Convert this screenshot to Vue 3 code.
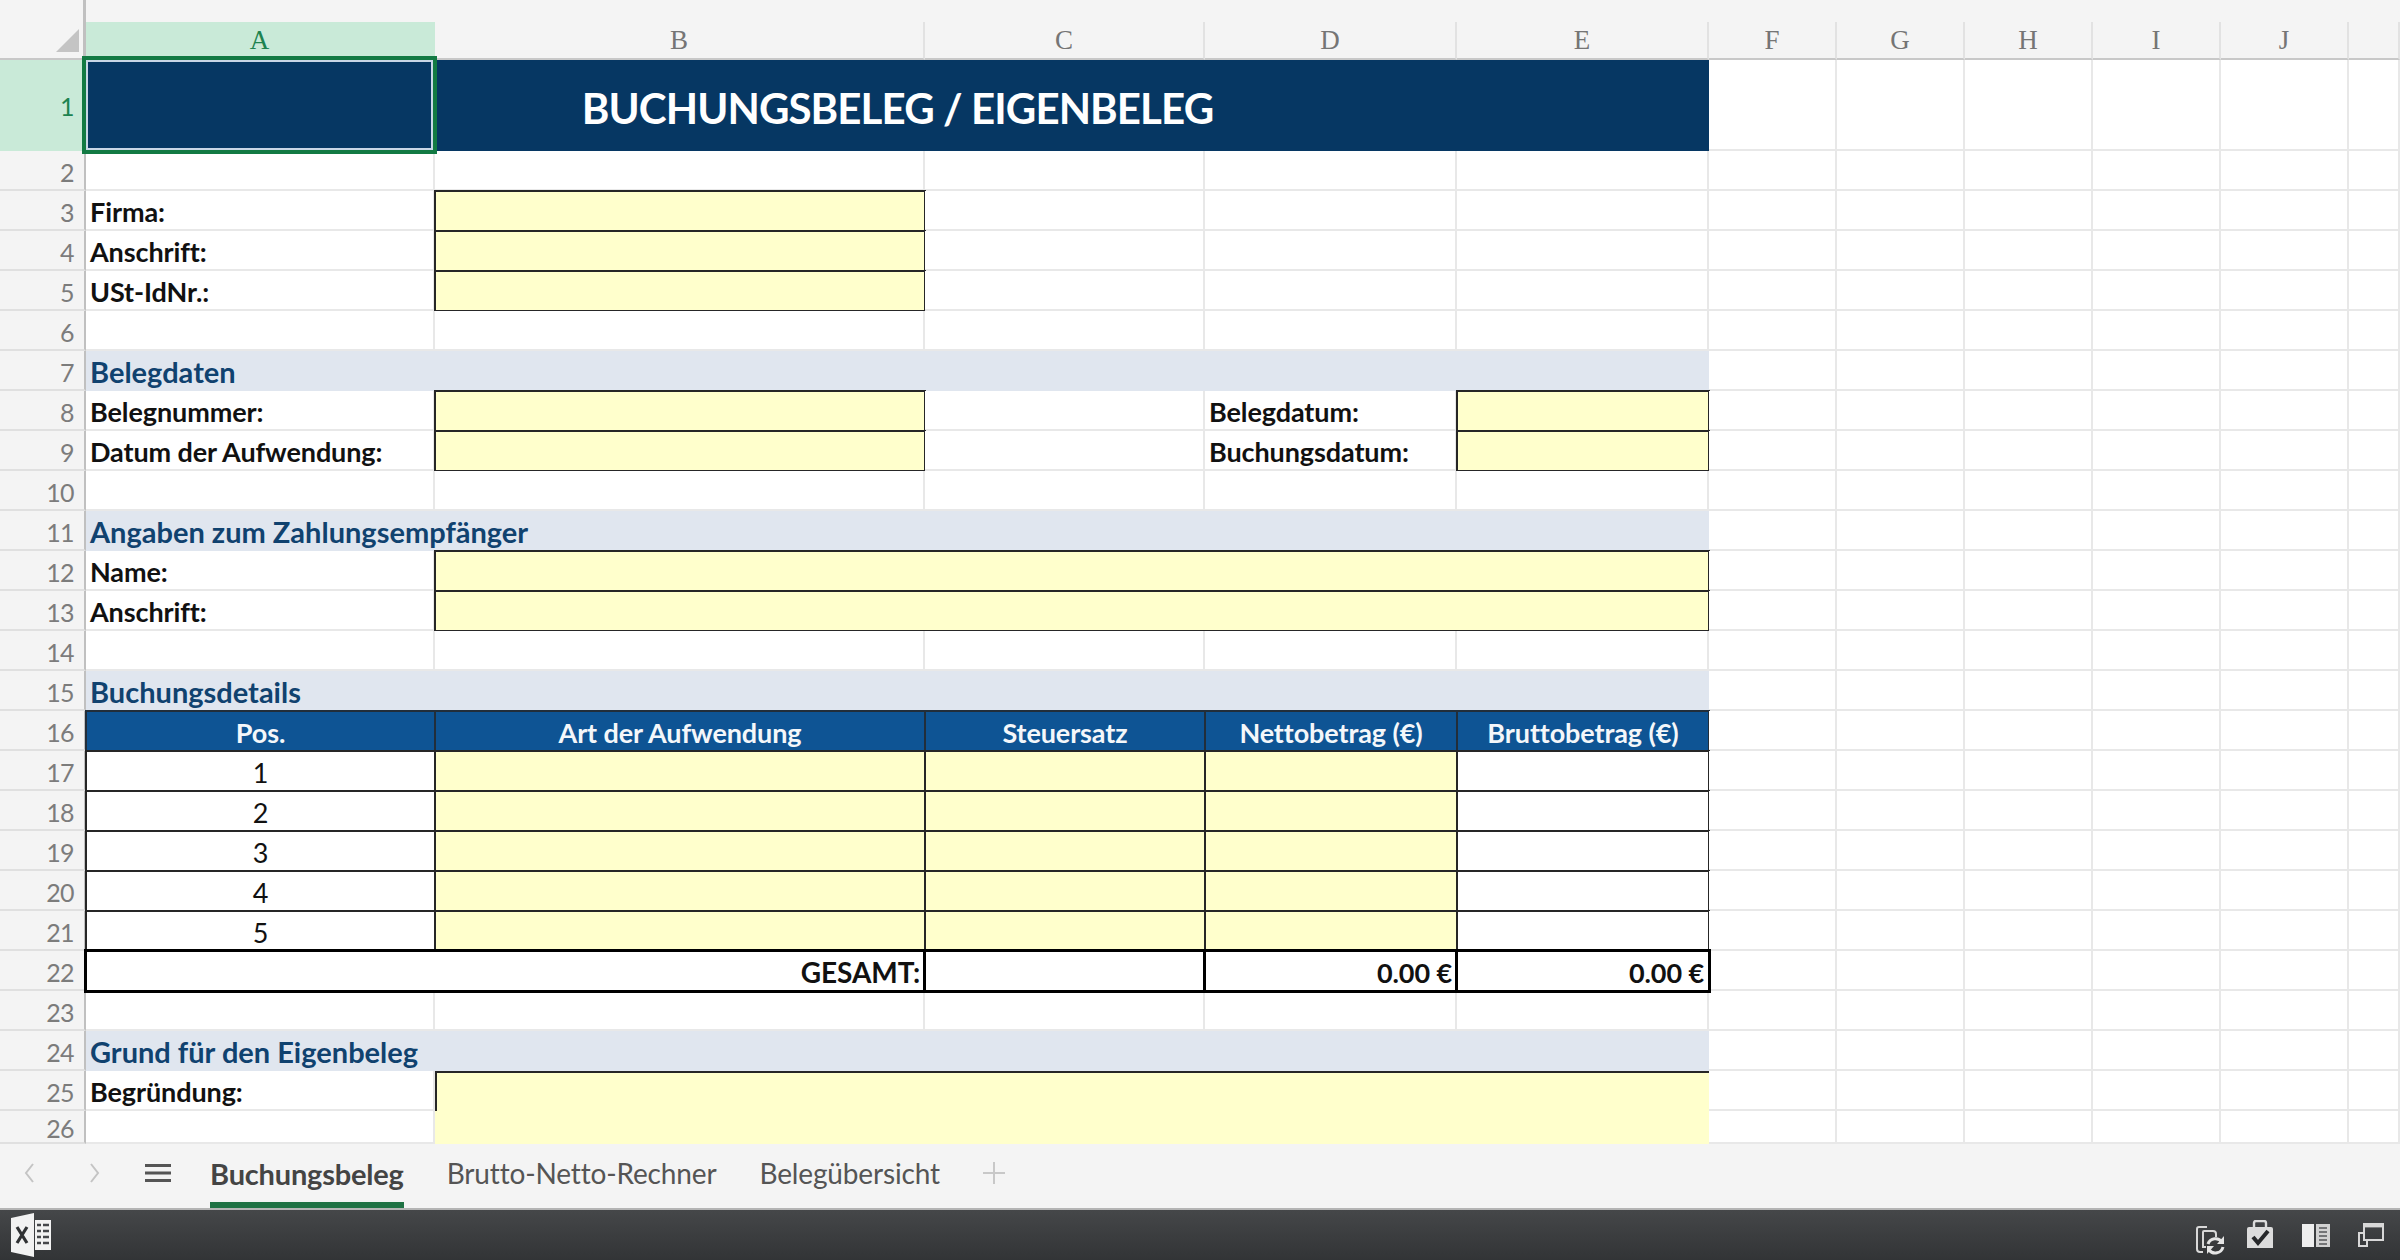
<template>
  <div class="page">
    <!-- Tabelle -->
    <section class="sheet">
      <div class="grid">
        <div class="corner"><span class="corner-mark"></span></div>
        <div v-for="c in columns" :key="c.key" class="col-head" :class="{ active: c.name === 'A' }">{{ c.name }}</div>

        <template v-for="row in rows" :key="row.nr">
          <div class="row-head" :class="{ active: row.nr === 1 }">{{ row.nr }}</div>
          <div
            v-for="(cell, i) in row.cells"
            :key="i"
            class="cell"
            :class="cell.type"
            :style="cell.span ? { gridColumn: 'span ' + cell.span } : null"
          >
            {{ cell.text }}
            <div v-if="cell.type === 'title'" class="selection"></div>
          </div>
        </template>
      </div>
    </section>

    <!-- Blattregister -->
    <nav class="tabs">
      <svg class="nav-arrow" width="16" height="24" viewBox="0 0 16 24"><path d="M11 3 L4 12 L11 21" /></svg>
      <svg class="nav-arrow next" width="16" height="24" viewBox="0 0 16 24"><path d="M5 3 L12 12 L5 21" /></svg>
      <svg class="menu" width="26" height="20" viewBox="0 0 26 20"><path d="M0 2.5 H26 M0 10 H26 M0 17.5 H26" /></svg>
      <div v-for="t in tabs" :key="t" class="tab" :class="{ active: t === 'Buchungsbeleg' }">{{ t }}</div>
      <svg class="plus" width="24" height="24" viewBox="0 0 24 24"><path d="M12 1 V23 M1 12 H23" /></svg>
    </nav>

    <!-- Statusleiste -->
    <footer class="status">
      <svg class="xl" width="42" height="44" viewBox="0 0 42 44">
        <path d="M1 5 L24 0 V44 L1 39 Z" fill="#f2f2f2" />
        <path d="M7 14 L17 30 M17 14 L7 30" stroke="#303234" stroke-width="3.2" fill="none" />
        <rect x="25" y="7" width="16" height="30" fill="#f2f2f2" />
        <path d="M27 12 H31 M33 12 H39 M27 18 H31 M33 18 H39 M27 24 H31 M33 24 H39 M27 30 H31 M33 30 H39" stroke="#45474a" stroke-width="2.6" />
      </svg>
      <div class="status-icons">
        <svg width="30" height="30" viewBox="0 0 30 30" class="ic-a">
          <path d="M8 26 H5 Q2 26 2 23 V3 Q2 1 4 1 H12" fill="none" stroke="#d8d8d8" stroke-width="2" />
          <path d="M11 21 H8 V6 Q8 5 9 5 H18 Q21 5 21 8 V11" fill="none" stroke="#d8d8d8" stroke-width="2" />
          <path d="M13 18 A8 8 0 0 1 27 16 M28 21 A8 8 0 0 1 14 24" fill="none" stroke="#e4e4e4" stroke-width="3" />
          <path d="M29 10 V18 H22 Z M12 28 V20 H19 Z" fill="#e4e4e4" />
        </svg>
        <svg width="30" height="30" viewBox="0 0 30 30" class="ic-b">
          <path d="M2 9 Q2 7 4 7 H26 Q28 7 28 9 V28 H2 Z" fill="#dcdcdc" />
          <path d="M9 8 V3 Q9 1 11 1 H19 Q21 1 21 3 V8" fill="none" stroke="#dcdcdc" stroke-width="2.4" />
          <path d="M8 17 L13 23 L23 11" fill="none" stroke="#26282a" stroke-width="4" />
        </svg>
        <svg width="28" height="23" viewBox="0 0 28 23" class="ic-c">
          <rect x="0" y="0" width="12" height="23" fill="#eeeeee" />
          <rect x="14" y="0" width="14" height="23" fill="#d2d2d2" />
          <path d="M17 4 H25 M17 8 H25 M17 12 H25 M17 16 H25 M17 20 H25" stroke="#55575a" stroke-width="1.6" />
        </svg>
        <svg width="26" height="24" viewBox="0 0 26 24" class="ic-d">
          <rect x="6" y="1" width="19" height="16" fill="none" stroke="#d8d8d8" stroke-width="2" />
          <rect x="7" y="2" width="17" height="2.4" fill="#d8d8d8" />
          <path d="M6 10 H1 V23 H9 V17" fill="none" stroke="#d8d8d8" stroke-width="2" />
        </svg>
      </div>
    </footer>
  </div>
</template>

<script setup>
const columnCount = 11;
const columns = ["A", "B", "C", "D", "E", "F", "G", "H", "I", "J", ""].map((name, i) => ({ name, key: i }));
const tabs = ["Buchungsbeleg", "Brutto-Netto-Rechner", "Belegübersicht"];

const label = (text) => ({ type: "label", text });
const section = (text) => ({ type: "section", text, span: 5 });
const head = (text) => ({ type: "table-head", text });
const input = (span) => ({ type: "input", span });

// Inhalt je Zeile, der Rest der Zeile wird mit leeren Zellen aufgefüllt
const content = {
  1: [{ type: "title", text: "BUCHUNGSBELEG / EIGENBELEG", span: 5 }],
  3: [label("Firma:"), input()],
  4: [label("Anschrift:"), input()],
  5: [label("USt-IdNr.:"), input()],
  7: [section("Belegdaten")],
  8: [label("Belegnummer:"), input(), {}, label("Belegdatum:"), input()],
  9: [label("Datum der Aufwendung:"), input(), {}, label("Buchungsdatum:"), input()],
  11: [section("Angaben zum Zahlungsempfänger")],
  12: [label("Name:"), input(4)],
  13: [label("Anschrift:"), input(4)],
  15: [section("Buchungsdetails")],
  16: [head("Pos."), head("Art der Aufwendung"), head("Steuersatz"), head("Nettobetrag (€)"), head("Bruttobetrag (€)")],
  22: [
    { type: "total strong", text: "GESAMT:", span: 2 },
    { type: "total" },
    { type: "total sum", text: "0.00 €" },
    { type: "total sum", text: "0.00 €" },
  ],
  24: [section("Grund für den Eigenbeleg")],
  25: [label("Begründung:"), { type: "open top", span: 4 }],
  26: [{}, { type: "open", span: 4 }],
};

for (let pos = 1; pos <= 5; pos++) {
  content[16 + pos] = [
    { type: "pos", text: String(pos) },
    input(),
    input(),
    input(),
    { type: "plain-box" },
  ];
}

const rows = [];
for (let nr = 1; nr <= 26; nr++) {
  const cells = [...(content[nr] || [])];
  let used = cells.reduce((sum, c) => sum + (c.span || 1), 0);
  while (used < columnCount) {
    cells.push({});
    used++;
  }
  rows.push({ nr, cells });
}
</script>

<style scoped>
.page {
  width: 2400px;
  height: 1260px;
  display: flex;
  flex-direction: column;
  background: #f4f4f4;
  font-family: Lato, "Liberation Sans", sans-serif;
  overflow: hidden;
}

.sheet {
  flex: 1;
  min-height: 0;
  overflow: hidden;
  background: #f4f4f4;
}

.grid {
  display: grid;
  grid-template-columns: 86px 349px 490px 280px 252px 252px 128px 128px 128px 128px 128px 51px;
  grid-template-rows: 60px 91px repeat(24, 40px) 33px;
}

.corner {
  background: #f4f4f4;
  border-right: 3px solid #c0c0c0;
  border-bottom: 2px solid #c8c8c8;
  display: flex;
  justify-content: flex-end;
  align-items: flex-end;
  padding: 0 4px 6px 0;
  box-sizing: border-box;
}

.corner-mark {
  width: 0;
  height: 0;
  border-left: 23px solid transparent;
  border-bottom: 23px solid #c4c4c4;
}

.col-head {
  background: #f4f4f4;
  margin-top: 22px;
  border-right: 2px solid #e2e2e2;
  border-bottom: 2px solid #c8c8c8;
  box-sizing: border-box;
  display: flex;
  align-items: center;
  justify-content: center;
  font-family: "Liberation Serif", serif;
  font-size: 27px;
  color: #757575;
}

.col-head.active {
  background: #c9ead8;
  color: #1d8350;
  border-right-color: #c9ead8;
}

.row-head {
  background: #f4f4f4;
  border-right: 2px solid #c0c0c0;
  border-bottom: 2px solid #e0e0e0;
  box-sizing: border-box;
  display: flex;
  align-items: center;
  justify-content: flex-end;
  padding: 3px 10px 0 0;
  font-size: 25px;
  letter-spacing: -0.6px;
  color: #7c7c7c;
}

.row-head.active {
  background: #c9ead8;
  color: #1d8350;
  border-bottom-color: #c9ead8;
}

.cell {
  min-width: 0;
  box-sizing: border-box;
  background: #fff;
  border-right: 2px solid #e8e8e8;
  border-bottom: 2px solid #e8e8e8;
  display: flex;
  align-items: center;
  padding: 2px 4px 0;
  font-size: 27px;
  letter-spacing: -0.1px;
  color: #111;
  white-space: nowrap;
}

.label {
  font-weight: 700;
}

.title {
  position: relative;
  z-index: 2;
  justify-content: center;
  background: #063763;
  border: none;
  padding-top: 5px;
  font-size: 42px;
  font-weight: 700;
  letter-spacing: -0.9px;
  color: #fff;
}

/* Markierung von A1 */
.selection {
  position: absolute;
  left: -4px;
  top: -4px;
  width: 355px;
  height: 98px;
  box-sizing: border-box;
  border: 4px solid #127a43;
  box-shadow: inset 0 0 0 2px #c8d6e6;
}

.section {
  background: #e0e6ef;
  border: none;
  padding-top: 0;
  font-size: 29px;
  letter-spacing: 0;
  font-weight: 700;
  color: #10426f;
}

.input {
  background: #ffffcc;
  outline: 2px solid #262626;
  outline-offset: -1px;
  border: none;
}

.table-head {
  justify-content: center;
  background: #0e5494;
  outline: 2px solid #222e3a;
  outline-offset: -1px;
  border: none;
  font-weight: 700;
  color: #f4f7fa;
}

.pos {
  justify-content: center;
  outline: 2px solid #262626;
  outline-offset: -1px;
  border: none;
}

.plain-box {
  outline: 2px solid #262626;
  outline-offset: -1px;
  border: none;
}

.total {
  position: relative;
  z-index: 1;
  justify-content: flex-end;
  outline: 3px solid #000;
  outline-offset: -1px;
  border: none;
  padding-right: 5px;
  font-size: 29px;
}

.total.strong {
  font-size: 28px;
  font-weight: 700;
}

.total.sum {
  font-size: 27px;
  font-weight: 700;
}

.open {
  background: #ffffcc;
  border: none;
}

.open.top {
  border-top: 2px solid #262626;
  border-left: 2px solid #262626;
}

.tabs {
  height: 64px;
  flex: none;
  display: flex;
  align-items: stretch;
  background: #f4f4f4;
}

.nav-arrow {
  align-self: center;
  margin: 0 0 6px 22px;
  fill: none;
  stroke: #c4c4c4;
  stroke-width: 2;
}

.nav-arrow.next {
  margin-left: 48px;
}

.menu {
  align-self: center;
  margin: 0 0 6px 43px;
  fill: none;
  stroke: #555;
  stroke-width: 3;
}

.tab {
  display: flex;
  align-items: center;
  padding-bottom: 6px;
  margin-left: 43px;
  font-size: 28px;
  letter-spacing: -0.15px;
  color: #555;
  box-sizing: border-box;
}

.tab.active {
  margin-left: 39px;
  font-size: 29px;
  letter-spacing: -0.2px;
  font-weight: 700;
  color: #444;
  border-bottom: 6px solid #1f7244;
  padding-bottom: 0;
}

.plus {
  align-self: center;
  margin: 0 0 6px 42px;
  fill: none;
  stroke: #c8c8c8;
  stroke-width: 2;
}

.status {
  height: 52px;
  flex: none;
  box-sizing: border-box;
  border-top: 2px solid #b4b4b4;
  background: linear-gradient(#454749, #323436);
  display: flex;
  align-items: center;
  justify-content: space-between;
  padding: 0 16px 0 10px;
}

.status-icons {
  display: flex;
  align-items: center;
  gap: 20px;
}

.ic-a {
  margin-top: 12px;
}

.ic-c {
  margin-left: 7px;
}

.ic-d {
  margin-left: 8px;
}
</style>
